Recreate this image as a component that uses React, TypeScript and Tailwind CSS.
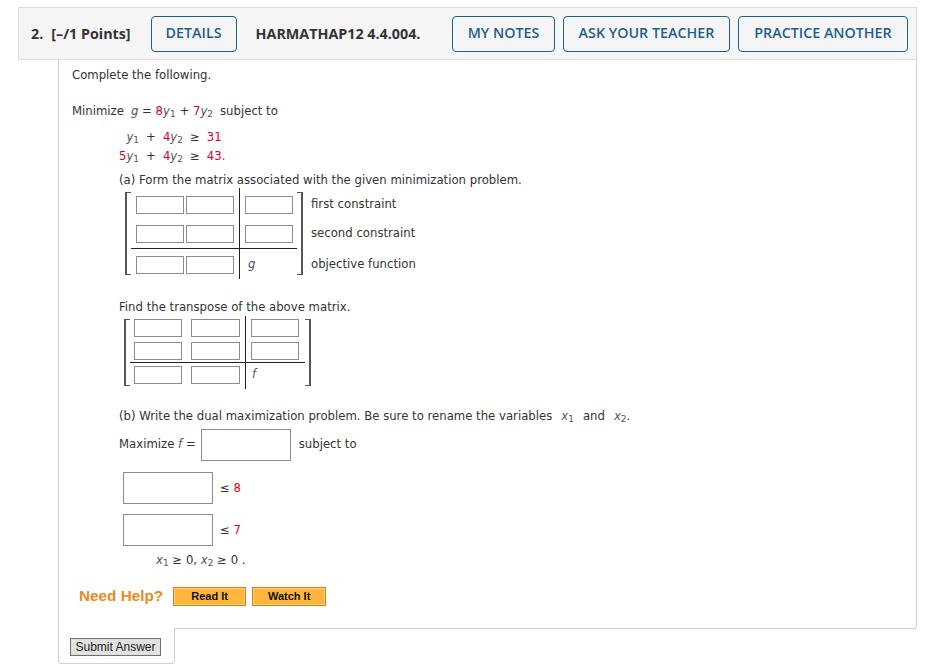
import React from 'react';

const body = { fontFamily: '"DejaVu Sans", Verdana, sans-serif' };
const head = { fontFamily: '"Open Sans", sans-serif' };
const arial = { fontFamily: '"Liberation Sans", Arial, sans-serif' };

function V({ c, s }: { c: string; s?: string }) {
  return (
    <span className="italic text-[#555]">
      {c}
      {s && <sub className="not-italic text-[9px]">{s}</sub>}
    </span>
  );
}

function R({ children }: { children: React.ReactNode }) {
  return <span className="text-[#e0001b]">{children}</span>;
}

function Box({ w = 'w-[48px]', h = 'h-[18px]' }: { w?: string; h?: string }) {
  return <div className={`${w} ${h} border border-[#8c8c8c] bg-white`} />;
}

function LeftBracket({ h }: { h: string }) {
  return <div className={`${h} w-[6px] border-l-2 border-t border-b border-[#555]`} />;
}

function RightBracket({ h }: { h: string }) {
  return <div className={`${h} w-[6px] border-r-2 border-t border-b border-[#555]`} />;
}

function HeadButton({ label, w }: { label: string; w: string }) {
  return (
    <div
      className={`${w} h-[36px] flex items-center justify-center pb-[1px] border border-[#1f5f8e] rounded-[4px] text-[#1f5f8e] text-[14.3px] font-semibold`}
    >
      {label}
    </div>
  );
}

export default function App() {
  return (
    <div className="w-[925px] h-[669px] bg-white overflow-hidden pt-[7px] text-[#333]">
      {/* question header */}
      <div
        style={head}
        className="ml-[18px] w-[899px] h-[53px] bg-[#f5f5f5] border border-[#dcdcdc] flex items-center pl-[12px] text-[14.3px] font-bold text-[#333]"
      >
        <span>2.</span>
        <span className="ml-[8px]">[–/1 Points]</span>
        <div className="ml-[20px]">
          <HeadButton label="DETAILS" w="w-[86px]" />
        </div>
        <span className="ml-[19px]">HARMATHAP12 4.4.004.</span>
        <div className="ml-auto mr-[8px] flex gap-[8px]">
          <HeadButton label="MY NOTES" w="w-[103px]" />
          <HeadButton label="ASK YOUR TEACHER" w="w-[167px]" />
          <HeadButton label="PRACTICE ANOTHER" w="w-[170px]" />
        </div>
      </div>

      {/* question body */}
      <div style={body} className="text-[11.7px] text-[#333]">
        <div className="ml-[58px] w-[859px] h-[570px] -mt-px border-l border-r border-b border-[#cfcfcf] rounded-br-[3px] pl-[13px] pt-[8px]">
          <div className="h-[16px] leading-[16px]">Complete the following.</div>

          <div className="mt-[20px] h-[16px] leading-[16px] flex items-center gap-[7px]">
            <span>Minimize</span>
            <span>
              <V c="g" /> = <R>8</R>
              <V c="y" s="1" /> + <R>7</R>
              <V c="y" s="2" />
            </span>
            <span>subject to</span>
          </div>

          <div className="mt-[9px] ml-[47px] grid grid-cols-[auto_auto_auto_auto_auto] gap-x-[7px] w-max leading-[19px]">
            <span className="justify-self-end">
              <V c="y" s="1" />
            </span>
            <span>+</span>
            <span>
              <R>4</R>
              <V c="y" s="2" />
            </span>
            <span>≥</span>
            <R>31</R>
            <span className="justify-self-end">
              <R>5</R>
              <V c="y" s="1" />
            </span>
            <span>+</span>
            <span>
              <R>4</R>
              <V c="y" s="2" />
            </span>
            <span>≥</span>
            <R>43.</R>
          </div>

          <div className="ml-[47px]">
            <div className="mt-[6px] h-[16px] leading-[16px]">(a) Form the matrix associated with the given minimization problem.</div>

            {/* matrix (a) */}
            <div className="mt-[0px] ml-[6px] flex items-center">
              <LeftBracket h="h-[83px]" />
              <div className="grid grid-cols-[109px_57px]">
                <div className="h-[30px] flex items-center gap-[2px] pl-[5px] pt-[4px] border-r border-[#222]">
                  <Box />
                  <Box />
                </div>
                <div className="h-[30px] flex items-center pl-[5px] pt-[4px]">
                  <Box />
                </div>
                <div className="h-[30px] flex items-center gap-[2px] pl-[5px] pt-[2px] border-r border-[#222]">
                  <Box />
                  <Box />
                </div>
                <div className="h-[30px] flex items-center pl-[5px] pt-[2px]">
                  <Box />
                </div>
                <div className="h-[31px] flex items-center gap-[2px] pl-[5px] pt-[2px] border-r border-t border-[#222]">
                  <Box />
                  <Box />
                </div>
                <div className="h-[31px] flex items-center pl-[8px] pt-[2px] border-t border-[#222]">
                  <V c="g" />
                </div>
              </div>
              <RightBracket h="h-[83px]" />
              <div className="ml-[8px] flex flex-col">
                <div className="h-[30px] flex items-center pt-[3px]">first constraint</div>
                <div className="h-[30px] flex items-center pt-[2px]">second constraint</div>
                <div className="h-[31px] flex items-center pt-[2px]">objective function</div>
              </div>
            </div>

            <div className="mt-[20px] h-[16px] leading-[16px]">Find the transpose of the above matrix.</div>

            {/* matrix transpose */}
            <div className="mt-[1px] ml-[5px] flex items-center">
              <LeftBracket h="h-[67px]" />
              <div className="grid grid-cols-[116px_59px]">
                <div className="h-[23px] flex items-center gap-[9px] pl-[4px] border-r border-[#222]">
                  <Box />
                  <Box w="w-[49px]" />
                </div>
                <div className="h-[23px] flex items-center pl-[5px]">
                  <Box />
                </div>
                <div className="h-[23px] flex items-center gap-[9px] pl-[4px] border-r border-[#222]">
                  <Box />
                  <Box w="w-[49px]" />
                </div>
                <div className="h-[23px] flex items-center pl-[5px]">
                  <Box />
                </div>
                <div className="h-[27px] flex items-start gap-[9px] pl-[4px] pt-[3px] border-r border-t border-[#222]">
                  <Box />
                  <Box w="w-[49px]" />
                </div>
                <div className="h-[27px] flex items-start pl-[6px] pt-[3px] border-t border-[#222]">
                  <V c="f" />
                </div>
              </div>
              <RightBracket h="h-[67px]" />
            </div>

            <div className="mt-[19px] h-[16px] leading-[16px] flex items-center gap-[9px]">
              <span>(b) Write the dual maximization problem. Be sure to rename the variables</span>
              <V c="x" s="1" />
              <span>and</span>
              <span>
                <V c="x" s="2" />.
              </span>
            </div>

            <div className="mt-[5px] flex items-center">
              <span>
                Maximize <span className="italic text-[#555]">f</span> =
              </span>
              <div className="ml-[5px]">
                <Box w="w-[90px]" h="h-[32px]" />
              </div>
              <span className="ml-[8px]">subject to</span>
            </div>

            <div className="mt-[11px] ml-[4px] flex items-center">
              <Box w="w-[90px]" h="h-[32px]" />
              <span className="ml-[7px] pt-[2px]">
                ≤ <R>8</R>
              </span>
            </div>
            <div className="mt-[10px] ml-[4px] flex items-center">
              <Box w="w-[90px]" h="h-[32px]" />
              <span className="ml-[7px] pt-[2px]">
                ≤ <R>7</R>
              </span>
            </div>
            <div className="mt-[6px] ml-[37px] h-[16px] leading-[16px]">
              <V c="x" s="1" /> ≥ 0, <V c="x" s="2" /> ≥ 0 .
            </div>
          </div>

          <div style={arial} className="mt-[17px] ml-[7px] flex items-center">
            <span className="text-[15.3px] font-bold text-[#ea8a22]">Need Help?</span>
            <div className="ml-[10px] w-[73px] h-[19px] flex items-center justify-center bg-[#ffb63d] border border-[#d9781c] shadow-[inset_0_0_0_1px_#ffd37a] text-[11px] font-bold text-[#111]">
              Read It
            </div>
            <div className="ml-[6px] w-[74px] h-[19px] flex items-center justify-center bg-[#ffb63d] border border-[#d9781c] shadow-[inset_0_0_0_1px_#ffd37a] text-[11px] font-bold text-[#111]">
              Watch It
            </div>
          </div>
        </div>

        {/* submit tab */}
        <div className="ml-[58px] -mt-px w-[117px] h-[36px] bg-white border-l border-r border-b border-[#cfcfcf] rounded-b-[4px] pl-[11px] pt-[10px] relative">
          <div
            style={arial}
            className="w-[91px] h-[18px] flex items-center justify-center bg-[#e1e1e1] border border-[#6f6f6f] text-[12px] text-[#222]"
          >
            Submit Answer
          </div>
        </div>
      </div>
    </div>
  );
}
